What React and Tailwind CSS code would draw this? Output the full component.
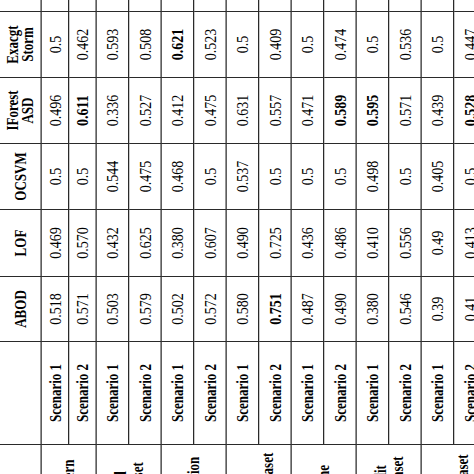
import React from "react";

const groups = [
  {
    name: ["Storm Pattern"],
    rows: [
      ["Scenario 1", "0.518", "0.469", "0.5", "0.496", "0.5"],
      ["Scenario 2", "0.571", "0.570", "0.5", "*0.611", "0.462"],
    ],
  },
  {
    name: ["Simulated", "Solar Dataset"],
    rows: [
      ["Scenario 1", "0.503", "0.432", "0.544", "0.336", "0.593"],
      ["Scenario 2", "0.579", "0.625", "0.475", "0.527", "0.508"],
    ],
  },
  {
    name: ["Fault Detection"],
    rows: [
      ["Scenario 1", "0.502", "0.380", "0.468", "0.412", "*0.621"],
      ["Scenario 2", "0.572", "0.607", "0.5", "0.475", "0.523"],
    ],
  },
  {
    name: ["KDD", "Network Dataset"],
    rows: [
      ["Scenario 1", "0.580", "0.490", "0.537", "0.631", "0.5"],
      ["Scenario 2", "*0.751", "0.725", "0.5", "0.557", "0.409"],
    ],
  },
  {
    name: ["Gas Turbine"],
    rows: [
      ["Scenario 1", "0.487", "0.436", "0.5", "0.471", "0.5"],
      ["Scenario 2", "0.490", "0.486", "0.5", "*0.589", "0.474"],
    ],
  },
  {
    name: ["Bank Credit", "Default Dataset"],
    rows: [
      ["Scenario 1", "0.380", "0.410", "0.498", "*0.595", "0.5"],
      ["Scenario 2", "0.546", "0.556", "0.5", "0.571", "0.536"],
    ],
  },
  {
    name: ["UCI", "Thyroid Dataset"],
    rows: [
      ["Scenario 1", "0.39", "0.49", "0.405", "0.439", "0.5"],
      ["Scenario 2", "0.41", "0.413", "0.5", "*0.528", "0.447"],
    ],
  },
];

const cell = "border border-[#2a2a2a] p-0 text-center align-middle";

const Value = ({ v }) => {
  const bold = v.startsWith("*");
  return (
    <td className={`${cell} text-[14px] ${bold ? "font-bold" : ""}`}>
      {bold ? v.slice(1) : v}
    </td>
  );
};

export default function App() {
  return (
    <div className="w-[474px] h-[474px] overflow-hidden bg-white">
      {/* the scanned table is turned on its side */}
      <div className="w-[609px] origin-top-left -translate-x-[2px] translate-y-[555px] -rotate-90 scale-y-[1.25]">
        <table className="w-[609px] table-fixed border-collapse text-black font-['Liberation_Serif',serif]">
          <colgroup>
            <col className="w-[110px]" />
            <col className="w-[103px]" />
            <col className="w-[65px]" />
            <col className="w-[67px]" />
            <col className="w-[66px]" />
            <col className="w-[66px]" />
            <col className="w-[66px]" />
            <col className="w-[66px]" />
          </colgroup>
          <thead>
            <tr className="h-[34px] text-[13px] font-bold leading-[12px]">
              <th className={cell}></th>
              <th className={cell}></th>
              <th className={cell}>ABOD</th>
              <th className={cell}>LOF</th>
              <th className={cell}>OCSVM</th>
              <th className={cell}>
                IForest
                <br />
                ASD
              </th>
              <th className={cell}>
                Exacgt
                <br />
                Storm
              </th>
              <th className={cell}>Ours</th>
            </tr>
          </thead>
          <tbody>
            {groups.map((g, gi) =>
              g.rows.map((r, ri) => (
                <tr key={`${gi}-${ri}`} className={gi === 0 ? "h-[20px]" : "h-[26px]"}>
                  {ri === 0 && (
                    <td
                      rowSpan={2}
                      className={`${cell} text-[13px] font-bold leading-[14px]`}
                    >
                      {g.name.map((n, i) => (
                        <div key={i} className="whitespace-nowrap">
                          {n}
                        </div>
                      ))}
                    </td>
                  )}
                  <td className={`${cell} text-[13px] font-bold`}>{r[0]}</td>
                  {r.slice(1).map((v, i) => (
                    <Value key={i} v={v} />
                  ))}
                  <td className={cell}></td>
                </tr>
              ))
            )}
          </tbody>
        </table>
      </div>
    </div>
  );
}
